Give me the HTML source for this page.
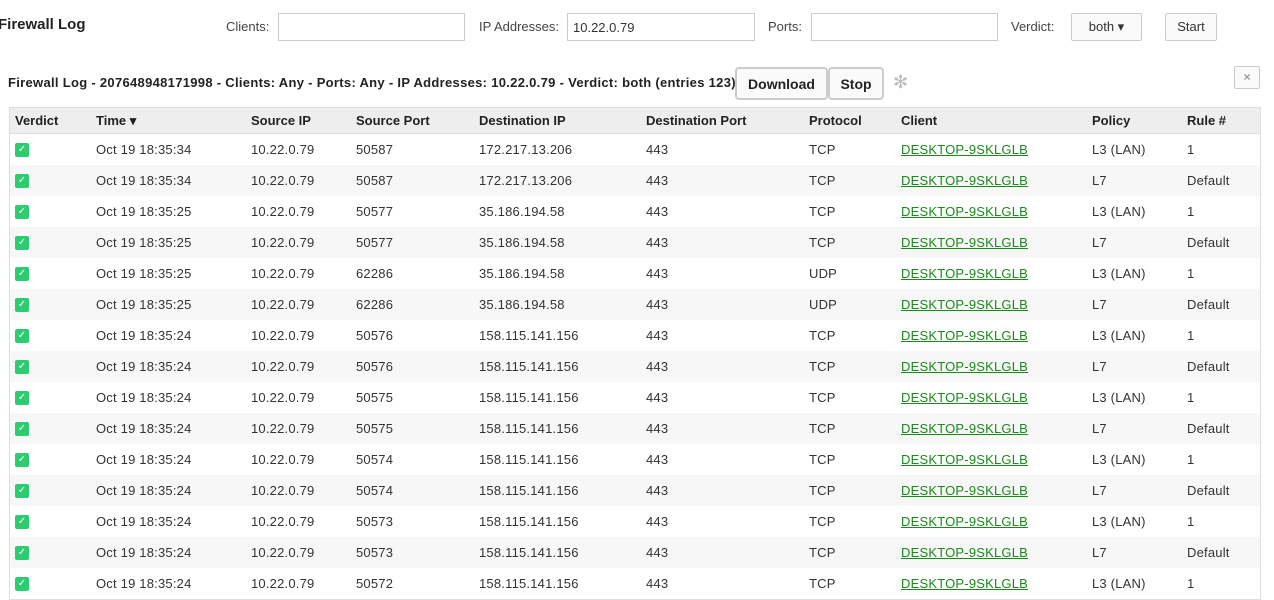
<!DOCTYPE html>
<html><head><meta charset="utf-8"><style>
body{margin:0;width:1274px;height:575px;overflow:hidden;background:#fff;font-family:"Liberation Sans",sans-serif;font-size:13px;color:#333}
.a{position:absolute}
h1{position:absolute;left:-2px;top:16px;margin:0;font-size:15px;font-weight:bold;color:#222}
.lbl{position:absolute;top:19px;font-size:13px;color:#444}
.inp{position:absolute;top:13px;height:28px;border:1px solid #ccc;box-sizing:border-box;padding:6px 5px;font-size:13px}
.btn{position:absolute;border:1px solid #ccc;background:#fafafa;border-radius:2px;box-sizing:border-box;text-align:center}
table{position:absolute;left:9px;top:107px;width:1252px;border-collapse:collapse;border:1px solid #ddd}
th{background:#eee;text-align:left;font-weight:bold;height:25px;padding:0 0 0 5px;border-bottom:1px solid #ddd;font-size:13px;color:#222}
td{height:31px;padding:0 0 0 5px;font-size:13px;color:#333;letter-spacing:0.2px}
tr:nth-child(odd) td{background:#f7f7f7}
.ck{display:inline-block;width:14px;height:14px;background:#2ecc71;border-radius:2px;color:#fff;font-size:10px;line-height:14px;text-align:center;vertical-align:middle;margin-top:-2px}
a{color:#1a8a1a;text-decoration:underline}
</style></head><body>
<h1>Firewall Log</h1>
<div class="lbl" style="left:226px">Clients:</div><div class="inp" style="left:278px;width:187px"></div>
<div class="lbl" style="left:479px">IP Addresses:</div><div class="inp" style="left:567px;width:188px">10.22.0.79</div>
<div class="lbl" style="left:768px">Ports:</div><div class="inp" style="left:811px;width:187px"></div>
<div class="lbl" style="left:1011px">Verdict:</div>
<div class="btn" style="left:1071px;top:13px;width:71px;height:28px;line-height:26px">both ▾</div>
<div class="btn" style="left:1165px;top:13px;width:52px;height:28px;line-height:26px">Start</div>
<div class="a" style="left:8px;top:75px;font-weight:bold;font-size:13px;color:#222;letter-spacing:0.3px">Firewall Log - 207648948171998 - Clients: Any - Ports: Any - IP Addresses: 10.22.0.79 - Verdict: both (entries 123)</div>
<div class="btn" style="left:735px;top:67px;width:93px;height:33px;line-height:31px;font-weight:bold;font-size:14px;border-width:2px;border-radius:4px;color:#222">Download</div>
<div class="btn" style="left:828px;top:67px;width:56px;height:33px;line-height:31px;font-weight:bold;font-size:14px;border-width:2px;border-radius:4px;color:#222">Stop</div>
<div class="a" style="left:893px;top:72px;color:#bbb;font-size:18px">✻</div>
<div class="btn" style="left:1234px;top:66px;width:26px;height:23px;line-height:21px;color:#999;font-size:12px;font-weight:bold">×</div>
<table>
<tr><th style="width:76px">Verdict</th><th style="width:150px">Time ▾</th><th style="width:100px">Source IP</th><th style="width:118px">Source Port</th><th style="width:162px">Destination IP</th><th style="width:158px">Destination Port</th><th style="width:87px">Protocol</th><th style="width:186px">Client</th><th style="width:90px">Policy</th><th>Rule #</th></tr>
<tr><td><span class="ck">✓</span></td><td>Oct 19 18:35:34</td><td>10.22.0.79</td><td>50587</td><td>172.217.13.206</td><td>443</td><td>TCP</td><td><a>DESKTOP-9SKLGLB</a></td><td>L3 (LAN)</td><td>1</td></tr>
<tr><td><span class="ck">✓</span></td><td>Oct 19 18:35:34</td><td>10.22.0.79</td><td>50587</td><td>172.217.13.206</td><td>443</td><td>TCP</td><td><a>DESKTOP-9SKLGLB</a></td><td>L7</td><td>Default</td></tr>
<tr><td><span class="ck">✓</span></td><td>Oct 19 18:35:25</td><td>10.22.0.79</td><td>50577</td><td>35.186.194.58</td><td>443</td><td>TCP</td><td><a>DESKTOP-9SKLGLB</a></td><td>L3 (LAN)</td><td>1</td></tr>
<tr><td><span class="ck">✓</span></td><td>Oct 19 18:35:25</td><td>10.22.0.79</td><td>50577</td><td>35.186.194.58</td><td>443</td><td>TCP</td><td><a>DESKTOP-9SKLGLB</a></td><td>L7</td><td>Default</td></tr>
<tr><td><span class="ck">✓</span></td><td>Oct 19 18:35:25</td><td>10.22.0.79</td><td>62286</td><td>35.186.194.58</td><td>443</td><td>UDP</td><td><a>DESKTOP-9SKLGLB</a></td><td>L3 (LAN)</td><td>1</td></tr>
<tr><td><span class="ck">✓</span></td><td>Oct 19 18:35:25</td><td>10.22.0.79</td><td>62286</td><td>35.186.194.58</td><td>443</td><td>UDP</td><td><a>DESKTOP-9SKLGLB</a></td><td>L7</td><td>Default</td></tr>
<tr><td><span class="ck">✓</span></td><td>Oct 19 18:35:24</td><td>10.22.0.79</td><td>50576</td><td>158.115.141.156</td><td>443</td><td>TCP</td><td><a>DESKTOP-9SKLGLB</a></td><td>L3 (LAN)</td><td>1</td></tr>
<tr><td><span class="ck">✓</span></td><td>Oct 19 18:35:24</td><td>10.22.0.79</td><td>50576</td><td>158.115.141.156</td><td>443</td><td>TCP</td><td><a>DESKTOP-9SKLGLB</a></td><td>L7</td><td>Default</td></tr>
<tr><td><span class="ck">✓</span></td><td>Oct 19 18:35:24</td><td>10.22.0.79</td><td>50575</td><td>158.115.141.156</td><td>443</td><td>TCP</td><td><a>DESKTOP-9SKLGLB</a></td><td>L3 (LAN)</td><td>1</td></tr>
<tr><td><span class="ck">✓</span></td><td>Oct 19 18:35:24</td><td>10.22.0.79</td><td>50575</td><td>158.115.141.156</td><td>443</td><td>TCP</td><td><a>DESKTOP-9SKLGLB</a></td><td>L7</td><td>Default</td></tr>
<tr><td><span class="ck">✓</span></td><td>Oct 19 18:35:24</td><td>10.22.0.79</td><td>50574</td><td>158.115.141.156</td><td>443</td><td>TCP</td><td><a>DESKTOP-9SKLGLB</a></td><td>L3 (LAN)</td><td>1</td></tr>
<tr><td><span class="ck">✓</span></td><td>Oct 19 18:35:24</td><td>10.22.0.79</td><td>50574</td><td>158.115.141.156</td><td>443</td><td>TCP</td><td><a>DESKTOP-9SKLGLB</a></td><td>L7</td><td>Default</td></tr>
<tr><td><span class="ck">✓</span></td><td>Oct 19 18:35:24</td><td>10.22.0.79</td><td>50573</td><td>158.115.141.156</td><td>443</td><td>TCP</td><td><a>DESKTOP-9SKLGLB</a></td><td>L3 (LAN)</td><td>1</td></tr>
<tr><td><span class="ck">✓</span></td><td>Oct 19 18:35:24</td><td>10.22.0.79</td><td>50573</td><td>158.115.141.156</td><td>443</td><td>TCP</td><td><a>DESKTOP-9SKLGLB</a></td><td>L7</td><td>Default</td></tr>
<tr><td><span class="ck">✓</span></td><td>Oct 19 18:35:24</td><td>10.22.0.79</td><td>50572</td><td>158.115.141.156</td><td>443</td><td>TCP</td><td><a>DESKTOP-9SKLGLB</a></td><td>L3 (LAN)</td><td>1</td></tr>
</table>
</body></html>
